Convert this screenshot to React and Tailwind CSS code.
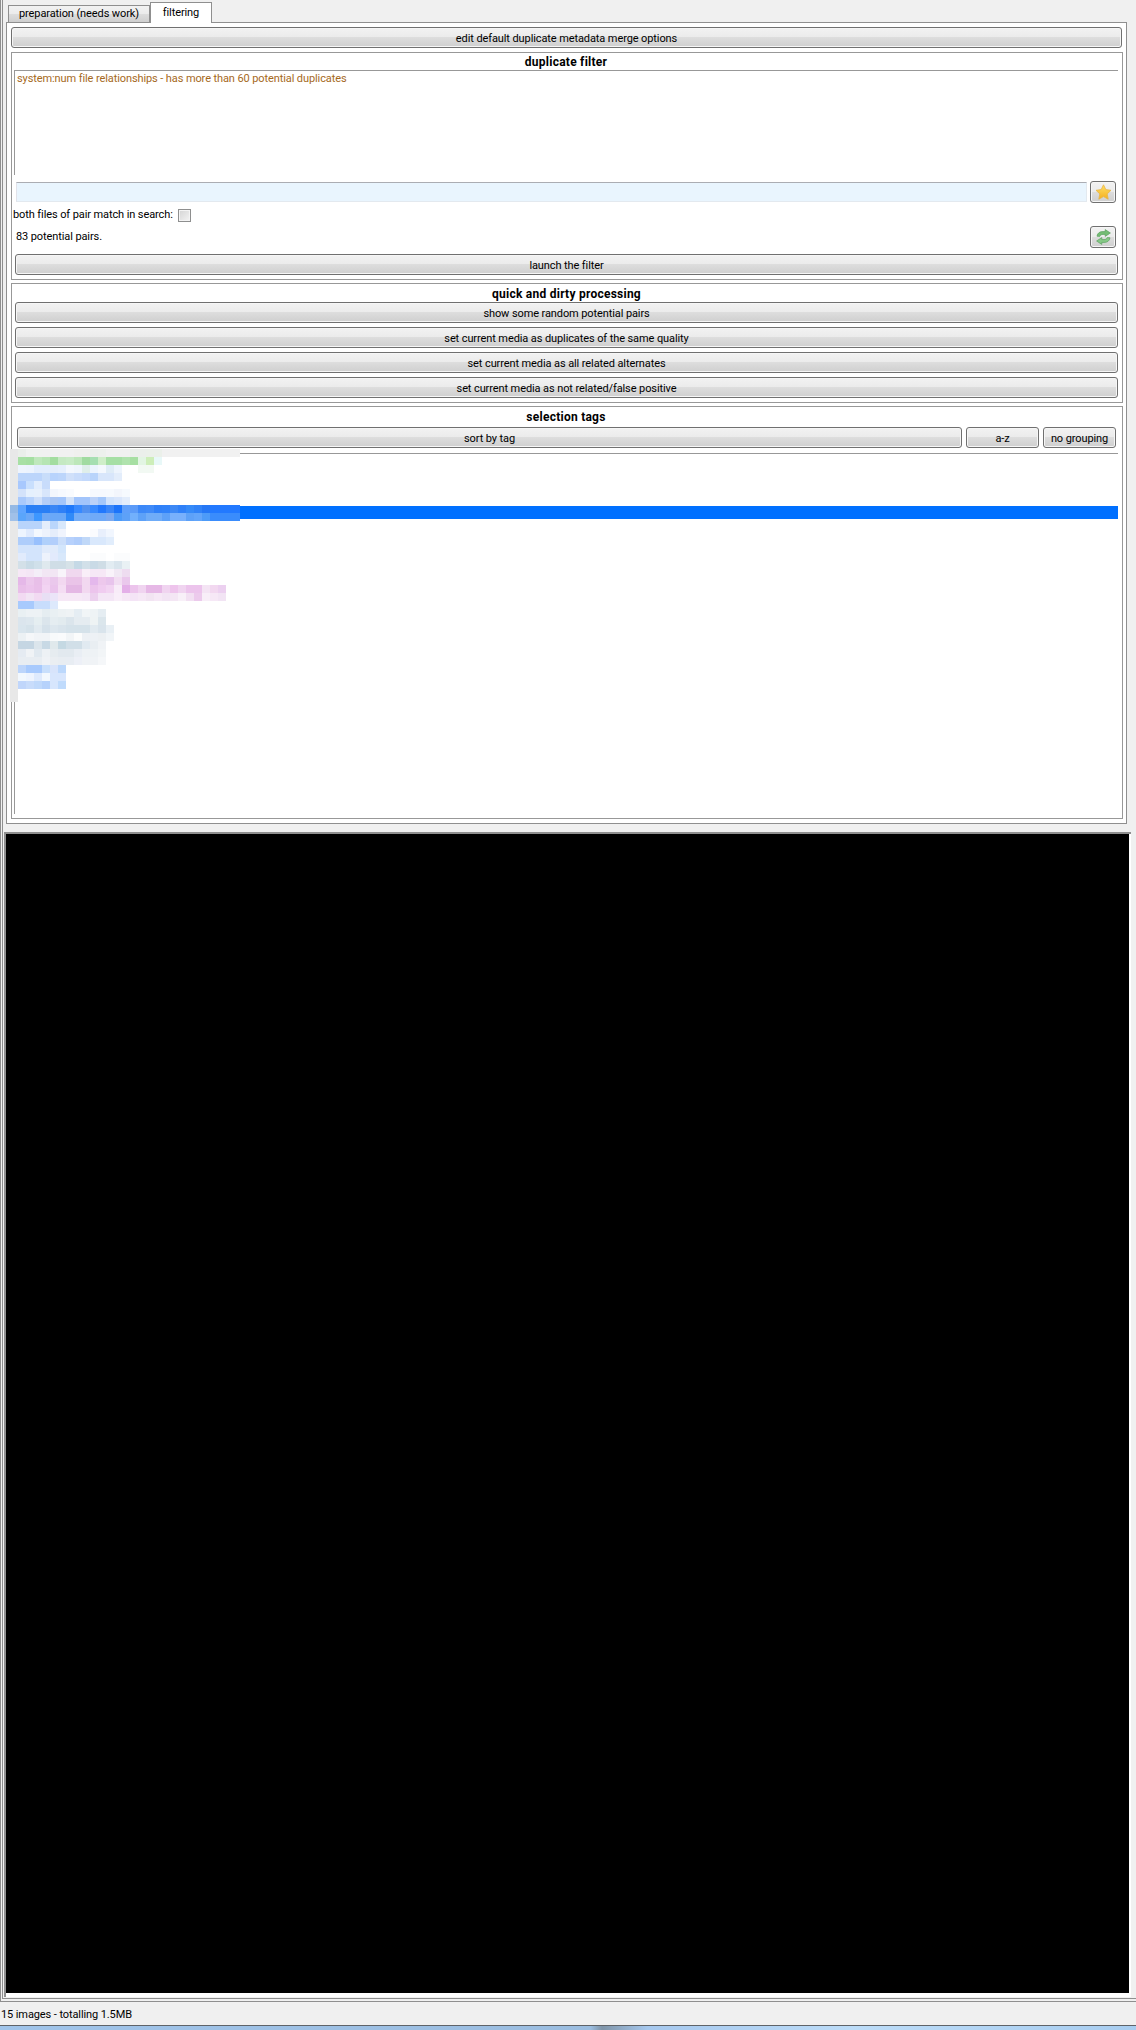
const btnCls = 'flex items-center justify-center h-[21px] pt-px rounded-[3px] border border-[#707070] text-[11px] leading-none text-black shadow-[inset_0_0_0_1px_#f6f6f6] bg-[linear-gradient(180deg,#f2f2f2_0%,#ebebeb_49%,#dddddd_50%,#cfcfcf_100%)]'
const titleCls = 'flex items-center justify-center pt-px font-bold text-[12px] tracking-[0.25px]'

// pixelated tag list, one string per 8px row
const MOSAIC = [
  'eaeeea f0f2f0 f0f2f0 f1f1f1 f1f1f1 f1f1f1 f1f1f1 f0f0ee f0f0ee ecefec edf0ed f1f1f1 f1f1f1 f1f1f1 ebefeb ebefeb ebf0ea ebf0ea f1f1f1 f1f1f1 f1f1f1 f1f1f1 f1f1f1 f1f1f1 f1f1f1 f1f1f1 f1f1f1 f1f1f1',
  'a8e0a5 a5dfa2 bfe8bc b6e5b3 a3dda0 c5e9c3 c8ebc6 bde7ba a1dba0 a6dfb2 cfeec9 a6dfa5 a6dfa5 b0e3ae a6dfa2 e2f5e3 cdeeb9 e8f8f8',
  'eef4fe ecf3fe e2edfd e2edfd e4edfb e6effd f3f7fe eff5fd dfeeea ecf4fe f4f8fe dfecf7 edf4fd ffffff ffffff f2f9f3 f2f9f3',
  'bcd5fb bcd5fb bcd5fb c8ddfa b8d3fc bcd5fb d0e0fa c9dcfb c3d9fc b9d4fb d8e6fb d8e6fb e3edfb',
  'a8c8fd c9dffd e2edfd c8dcfb',
  'd3e2fa e5f0fd e7f0fc d8e6fb f2f6fd f6f9fe f9fbfe ffffff ffffff f6f9fe f6f9fe f7fafe f3f6fc f6fafe',
  'a9c9fb b9d3fb cfdff9 b3cdf7 a9c5f3 a3c5fa d3e2f8 a3c5fb a3c5fb bad1f8 a4c7fa d2e3fb d9e6fb e3edfb',
  '5fa5ff 2a7ff5 2a7ff5 2a7ff5 3a86f5 2f80f7 1f78fa 388aff 5392f0 388aff 2278fd 3a86f8 1c74fa 5f9ffa 5c9bf8 3c88f8 3f8af8 2f80f8 3082f9 3d88f5 2f80f8 358af8 3082f7 2577f5 2279ff 2279ff 2279ff 2279ff',
  '5aa5fb 6aa8f8 3d97ff 6fa8f5 6aa8f8 6aa8f8 308af8 74adf8 74adf8 70aaf8 70aaf8 7daaf0 4d9bf8 5da1f8 72b0fc 5da1f8 6facf8 6facf8 5da1f8 78b0fc 78b0fc 5da1f8 62a5fa 4d9bf8 3a8cfc 3a8cfc 3a8cfc 3a8cfc',
  'b8d4fb b8d4fb b8d4fb e4edfb bad6fb d8e8fb',
  'edf4fe dfeafd f4f8fe edf2fc e5edfb f0f4fd ffffff ffffff ffffff fafbfe e8effc f1f6fe',
  'aecdfb aecdfb 98c0fd b0d0fb b2cefb cbdefa b7d1fc b0cdfb c0d8f8 d9e8fc d9e8fc e1edfc',
  'd3e4fc d3e4fc d3e4fc e1ebfb e1ebfb d3e6fc',
  'e1ebfc d3e4fc d3e4fc edf2fc e2eafc d8e8fb ffffff ffffff ffffff fbfcfd fbfcfd ffffff fbfcfd fbfcfd',
  'd3e0e8 c9dbe6 d0e0ea dfe9ee cfdde6 cfdde6 d6e2e8 c5d9e6 d2e0e9 c9dae6 cfdde6 e2ecf2 d9e5ed e9f1f4',
  'f6e8f6 f4e6f5 f4eef8 f2e6f4 f2e6f4 f8f4fa f0d8ef f0d8ef f9eef8 f6e8f6 f6e8f6 f9f3fa f1e8f4 eedcf0',
  'e5b8e8 ecc8ec e8bfe8 f0d0f0 eac8ec f2d8f0 eac4e8 eac4e8 f2d8f0 e4b8ec edc8ec e8c4ec f2ddf2 eac8ec',
  'e9bfe9 ecc4ec e9bfe9 f2d4f2 eac4ec f4ddf3 e4b8e4 e4b8e4 f2d8f0 ecc4ec f0ccf0 f2d4f2 f8ecf8 e4b0e8 ecc4ec f0d4f0 e6b8e6 e6b8e6 f0d4f0 eec4ec f0d4f0 ecc4ec ecc4ec f4e4f4 f2d8f0 ecd0f0',
  'f2daf2 f2e4f4 f2daf2 e8dff4 ebe4f8 f6e8f6 f6e8f6 f6e8f6 f4e6f6 ecd0ee f4e6f6 f4e6f6 f9eef9 f6e8f6 f4e4f6 f6e8f6 f2e4f2 f6e8f6 f2e4f4 f4e6f4 f8f0f8 f2e0f2 eccaec f8eef8 f6e8f6 f2e4f4',
  'a8cafd a8cafd c8ddfc c8ddfc dde9fc',
  'e9f0f3 edf2f5 edf2f5 e5edf1 e9f0f3 edf2f4 eff3f5 e5edf3 f1f5f7 eef3f5 e5edf2',
  'dbe5ed dde7ee e5eef1 dbe5ec e5edf1 e2ebef dbe5ec e5ecf1 e5ecf1 eef3f4 dbe6ec',
  'd9e5ed d5e2ea e1eaf0 d5e1ea dde7ee d9e4ec d5e2ea d5e2ea d5e2ea e1eaf0 d9e4ec e9f0f5',
  'ecf1f4 f5f7f9 f1f4f7 f1f4f7 f8fafb fafbfc f2f5f7 fbfcfc edf1f5 edf1f5 ecf0f3 f1f5f8',
  'c5d6e3 c5d6e3 dbe5ec c8d9e5 e0e9ec c5d9e3 d1dfe8 d1dfe8 e1eaf1 e9eef2 f0f3f6',
  'e5ebf2 f0f3f6 e1e9f0 edf1f5 e6ecf0 e2e9ef e2e9ef e9eef4 eef2f5 eef2f5 f2f5f7',
  'e8edf2 e8edf2 e8edf2 eff2f6 eaeef2 e8edf2 e8edf3 edf0f7 f0f3f6 f0f3f6 f5f7f9',
  'bcd5fb a8cafd a8cafd c8dffc d8e4fb bcd8fc',
  'f2f8fe eef4fe deeafd f2f8fe d8e6fd d8e6fd',
  'c0d6fb c8dcfb c0d9fb b6d2fb d7e6fd c0dbfc',
  '',
]

const firstCell = (i) => (i === 7 ? '#95b9e4' : i === 8 ? '#a0c0e8' : '#e8e8e8')

function Mosaic() {
  return (
    <div className="absolute left-[-5px] top-[-5px] flex flex-col">
      {MOSAIC.map((row, i) => (
        <div key={i} className="flex h-2 w-[230px] overflow-hidden">
          <div className="w-2 h-2 shrink-0" style={{ backgroundColor: firstCell(i) }} />
          {row.split(' ').filter(Boolean).map((c, j) => (
            <div key={j} className="w-2 h-2 shrink-0" style={{ backgroundColor: `#${c}` }} />
          ))}
        </div>
      ))}
      <div className="w-2 h-[5px] bg-[#e8e8e8]" />
    </div>
  )
}

function StarIcon() {
  return (
    <svg width="17" height="16" viewBox="0 0 17 16">
      <defs>
        <linearGradient id="star" x1="0" y1="0" x2="0" y2="1">
          <stop offset="0" stopColor="#ffe066" />
          <stop offset="1" stopColor="#f5b01f" />
        </linearGradient>
      </defs>
      <path d="M8.5 .8 10.8 5.6 16 6.3 12.2 9.9 13.2 15.2 8.5 12.6 3.8 15.2 4.8 9.9 1 6.3 6.2 5.6Z" fill="url(#star)" stroke="#e8b545" strokeWidth="0.8" strokeLinejoin="round" />
    </svg>
  )
}

function RefreshIcon() {
  return (
    <svg width="17" height="16" viewBox="0 0 17 16">
      <path d="M2 7.2C2.4 4 5 2.4 8 2.6H10.2V.6L15.4 4 10.2 7.4V5.4H8C6.4 5.4 5.3 6 4.8 7.4Z" fill="#74bd74" stroke="#5aa05f" strokeWidth="0.7" strokeLinejoin="round" />
      <path d="M15 8.8C14.6 12 12 13.6 9 13.4H6.8V15.4L1.6 12 6.8 8.6V10.6H9C10.6 10.6 11.7 10 12.2 8.6Z" fill="#86c986" stroke="#5aa05f" strokeWidth="0.7" strokeLinejoin="round" />
    </svg>
  )
}

function IconBtn({ children }) {
  return <div className={`${btnCls} w-[26px] !h-[22px] !pt-0`}>{children}</div>
}

export default function App() {
  return (
    <div className="w-[1136px] h-[2030px] overflow-hidden flex flex-col bg-[#f0f0f0] font-['Roboto',sans-serif] text-[11px] tracking-[-0.1px] text-black">
      <div className="h-[2002px] border-l border-b border-[#8f8f8f] pl-px pb-[2px]">
        <div className="h-full flex flex-col border-l border-b border-[#8f8f8f]">
          {/* tabs */}
          <div className="h-[22px] flex items-end pl-[5px] shrink-0 relative">
            <div className="w-[142px] h-[17px] pt-px flex items-center justify-center border border-b-0 border-[#8f8f8f] bg-[linear-gradient(180deg,#f2f2f2_0%,#ebebeb_49%,#dddddd_50%,#cfcfcf_100%)]">
              preparation (needs work)
            </div>
            <div className="w-[62px] h-[21px] -mb-px z-10 flex items-center justify-center border border-b-0 border-[#8f8f8f] bg-white">
              filtering
            </div>
          </div>

          <div className="ml-[3px] mr-[9px] h-[802px] shrink-0 border border-[#8f8f8f] bg-white pt-[4px] px-[4px]">
            <div className={btnCls}>edit default duplicate metadata merge options</div>

            {/* duplicate filter */}
            <div className="mt-[4px] -mr-px h-[228px] border border-[#989898] pl-[2px] pr-[4px]">
              <div className={`${titleCls} h-[17px]`}>duplicate filter</div>
              <div className="h-[105px] border-l border-t border-[#989898] pl-[2px] pt-px text-[#a5691c] leading-[14px]">
                system:num file relationships - has more than 60 potential duplicates
              </div>
              <div className="mt-[6px] flex items-center pl-[2px] pr-[2px] gap-[3px]">
                <div className="flex-1 h-[20px] border border-[#abadb3] border-b-[#e3e9ef] border-r-[#e3e9ef] border-l-[#e2e3ea] bg-[#e9f5fe]" />
                <IconBtn><StarIcon /></IconBtn>
              </div>
              <div className="h-[16px] mt-[4px] -ml-px flex items-center gap-[5px]">
                <span>both files of pair match in search:</span>
                <span className="w-[13px] h-[13px] border border-[#8e8f8f] shadow-[inset_0_0_0_1px_#f4f4f4] bg-[linear-gradient(135deg,#d4d4d4,#f4f4f4)]" />
              </div>
              <div className="mt-[3px] flex items-center justify-between pl-[2px] pr-[2px]">
                <span className="pt-px">83 potential pairs.</span>
                <IconBtn><RefreshIcon /></IconBtn>
              </div>
              <div className={`${btnCls} mt-[6px] ml-px`}>launch the filter</div>
            </div>

            {/* quick and dirty */}
            <div className="mt-[3px] -mr-px h-[120px] border border-[#989898] pl-[3px] pr-[4px]">
              <div className={`${titleCls} h-[18px]`}>quick and dirty processing</div>
              <div className="flex flex-col gap-[4px]">
                <div className={btnCls}>show some random potential pairs</div>
                <div className={btnCls}>set current media as duplicates of the same quality</div>
                <div className={btnCls}>set current media as all related alternates</div>
                <div className={btnCls}>set current media as not related/false positive</div>
              </div>
            </div>

            {/* selection tags */}
            <div className="mt-[3px] -mr-px h-[413px] border border-[#989898] pl-[2px] pr-[4px]">
              <div className={`${titleCls} h-[18px] mb-[2px]`}>selection tags</div>
              <div className="flex gap-[4px] pl-[3px] pr-[2px]">
                <div className={`${btnCls} flex-1`}>sort by tag</div>
                <div className={`${btnCls} w-[73px]`}>a-z</div>
                <div className={`${btnCls} w-[73px]`}>no grouping</div>
              </div>
              <div className="relative mt-[5px] h-[361px] border-l border-t border-[#989898]">
                <div className="mt-[52px] h-[13px] bg-[#0070ff]" />
                <Mosaic />
              </div>
            </div>
          </div>

          {/* media viewer */}
          <div className="ml-px mt-[8px] mr-[5px] h-[1165px] shrink-0 border-l-2 border-t-2 border-[#8f8f8f] bg-white pr-[2px] pb-[4px]">
            <div className="h-full bg-black" />
          </div>
        </div>
      </div>

      <div className="flex-1 flex flex-col">
        <div className="h-[23px] pl-px pt-[2px] flex items-center leading-none">15 images - totalling 1.5MB</div>
        <div className="h-px bg-[#5f6368]" />
        <div className="flex-1 bg-[linear-gradient(90deg,#a0c4ea_0%,#9bbde0_52%,#7f94a8_53%,#a6c8ee_57%,#bcdcf8_75%,#a8cdf0_100%)]" />
      </div>
    </div>
  )
}
